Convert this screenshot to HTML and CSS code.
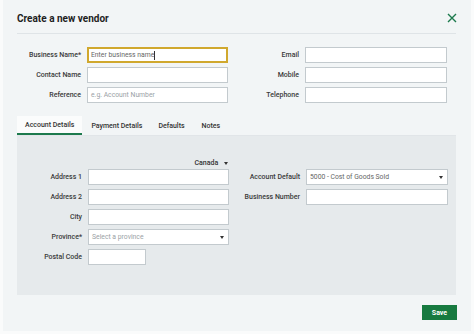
FILE: index.html
```html
<!DOCTYPE html>
<html>
<head>
<meta charset="utf-8">
<link rel="stylesheet" href="styles.css">
</head>
<body>
<div class="dialog">
  <div class="header">
    <h1 class="title">Create a new vendor</h1>
    <span class="close" aria-label="Close">
      <svg width="10" height="10" viewBox="0 0 10 10"><path d="M1 1L9 9M9 1L1 9" stroke="#1d7a4d" stroke-width="1.4" fill="none"/></svg>
    </span>
  </div>

  <div class="grid top">
    <label class="lbl">Business Name*</label>
    <div class="input focus"><span class="ph dark">Enter business name</span><span class="caret"></span></div>
    <label class="lbl">Email</label>
    <div class="input"></div>

    <label class="lbl">Contact Name</label>
    <div class="input"></div>
    <label class="lbl">Mobile</label>
    <div class="input"></div>

    <label class="lbl">Reference</label>
    <div class="input"><span class="ph">e.g. Account Number</span></div>
    <label class="lbl">Telephone</label>
    <div class="input"></div>
  </div>

  <div class="tabs">
    <div class="tab active">Account Details</div>
    <div class="tab">Payment Details</div>
    <div class="tab">Defaults</div>
    <div class="tab">Notes</div>
  </div>

  <div class="panel">
    <div class="country-row"><span class="country">Canada <span class="tri"></span></span></div>
    <div class="grid inner">
      <label class="lbl">Address 1</label>
      <div class="input"></div>
      <label class="lbl">Account Default</label>
      <div class="input select"><span class="ph dark">5000 - Cost of Goods Sold</span><span class="tri small"></span></div>

      <label class="lbl">Address 2</label>
      <div class="input"></div>
      <label class="lbl">Business Number</label>
      <div class="input"></div>

      <label class="lbl">City</label>
      <div class="input"></div>
      <div></div><div></div>

      <label class="lbl">Province*</label>
      <div class="input select"><span class="ph">Select a province</span><span class="tri small"></span></div>
      <div></div><div></div>

      <label class="lbl">Postal Code</label>
      <div class="input short"></div>
      <div></div><div></div>
    </div>
  </div>

  <div class="footer">
    <button class="save">Save</button>
  </div>
</div>
</body>
</html>
```

FILE: styles.css
```css
* { box-sizing: border-box; }
html, body { margin: 0; padding: 0; }
body {
  background: #fafbfb;
  font-family: Roboto, "Liberation Sans", sans-serif;
  color: #333;
  width: 474px;
  height: 334px;
  overflow: hidden;
}
.dialog {
  margin: 0 3px;
  height: 331px;
  background: #f2f5f6;
  padding: 0 15px 0 14px;
}
.header {
  height: 34px;
  border-bottom: 1px solid #dfe4e7;
  display: flex;
  align-items: center;
  justify-content: space-between;
  padding-top: 3px;
}
.title {
  margin: 0;
  font-size: 10px;
  font-weight: 700;
  color: #1e1e1e;
}
.close { display: flex; margin-right: -1px; }

.grid {
  display: grid;
  grid-template-columns: 64px 141px 65px 142px;
  column-gap: 6px;
  row-gap: 4px;
  grid-auto-rows: 16px;
  align-items: center;
}
.top { margin-top: 13px; }
.lbl {
  text-align: right;
  font-size: 7px;
  font-weight: 500;
  color: #3a3a3a;
  white-space: nowrap;
}
.input {
  height: 16px;
  background: #fff;
  border: 1px solid #c3cace;
  display: flex;
  align-items: center;
  padding: 0 3px;
  position: relative;
}
.input.focus { border: 2px solid #d0a82e; padding: 0 2px; }
.ph { font-size: 6.8px; color: #9aa1a5; white-space: nowrap; }
.ph.dark { color: #666; }
.caret { width: 1px; height: 9px; background: #333; margin-left: 0; }
.input.short { width: 58px; }
.select { justify-content: space-between; }
.tri {
  display: inline-block;
  width: 0; height: 0;
  border-left: 2.5px solid transparent;
  border-right: 2.5px solid transparent;
  border-top: 3px solid #333;
  vertical-align: middle;
  margin-left: 4px;
}
.tri.small { margin-right: 1px; }

.tabs {
  display: flex;
  margin-top: 13px;
  height: 20px;
  border-bottom: 1px solid #e1e5e8;
}
.tab {
  font-size: 7px;
  font-weight: 500;
  color: #333;
  padding: 1px 8px 0;
  display: flex;
  align-items: center;
}
.tab.active {
  background: #fbfcfc;
  border-bottom: 2px solid #1d7a4d;
}
.tabs .tab:nth-child(2) { padding-left: 9px; padding-right: 8px; }
.tabs .tab:nth-child(3) { padding-left: 8px; padding-right: 9px; }

.panel {
  background: #e6eaec;
  height: 159px;
  padding-top: 22px;
}
.country-row {
  width: 211px;
  display: flex;
  justify-content: flex-end;
  height: 10px;
  align-items: center;
}
.country { font-size: 7px; font-weight: 500; color: #333; }
.inner { margin-top: 1px; grid-template-columns: 65px 141px 65px 142px; column-gap: 6px; }

.footer {
  display: flex;
  justify-content: flex-end;
  padding-top: 10px;
  margin-right: -1px;
}
.save {
  width: 35px;
  height: 15px;
  background: #177a40;
  border: none;
  color: #fff;
  font-family: inherit;
  font-size: 7px;
  font-weight: 700;
  padding: 0;
}
```
